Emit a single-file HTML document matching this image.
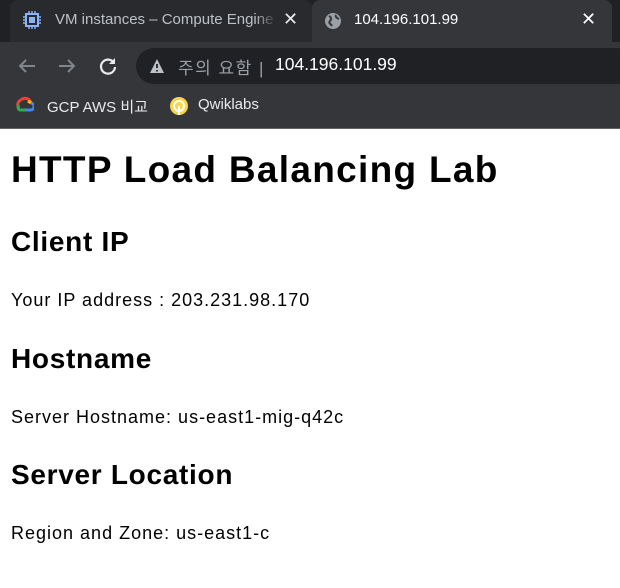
<!DOCTYPE html>
<html><head><meta charset="utf-8"><style>
*{margin:0;padding:0;box-sizing:border-box}
body{width:620px;height:588px;background:#fff;font-family:"Liberation Sans","Noto Sans CJK KR",sans-serif;overflow:hidden;position:relative}
.top{position:absolute;left:0;top:0;width:620px;height:42px;background:#202124}
.tab1{position:absolute;left:10px;top:0;width:302px;height:42px;background:#292a2d;border-radius:8px 8px 0 0;color:#bdc1c6;font-size:15px}
.tab2{position:absolute;left:312px;top:0;width:300px;height:42px;background:#35363a;border-radius:8px 8px 0 0;color:#fff;font-size:15px}
.tool{position:absolute;left:0;top:42px;width:620px;height:86px;background:#35363a}
.addr{position:absolute;left:136px;top:48px;width:500px;height:36px;background:#202124;border-radius:18px}
.t{position:absolute;white-space:nowrap}
.line{position:absolute;left:0;top:128px;width:620px;height:1px;background:#5f6368}
.c{position:absolute;left:11px;color:#000;white-space:nowrap}
h1{font-size:37px;font-weight:bold;letter-spacing:1.3px}
h2{font-size:28px;font-weight:bold;letter-spacing:0.7px}
p{font-size:18px;letter-spacing:1px}
</style></head><body>
<div class="top"></div>
<div class="tab1">
 <svg class="t" style="left:12px;top:10px" width="20" height="20" viewBox="0 0 20 20"><rect x="4" y="4" width="12" height="12" fill="none" stroke="#8ab4f8" stroke-width="2"/><rect x="7" y="7" width="6" height="6" fill="#8ab4f8"/><path d="M7 1v3M10 1v3M13 1v3M7 16v3M10 16v3M13 16v3M1 7h3M1 10h3M1 13h3M16 7h3M16 10h3M16 13h3" stroke="#8ab4f8" stroke-width="1.4"/></svg>
 <div class="t" style="left:45px;top:11px;width:220px;overflow:hidden">VM instances – Compute Engine</div>
 <div class="t" style="left:245px;top:8px;width:22px;height:26px;background:linear-gradient(to right,rgba(41,42,45,0),#292a2d)"></div>
 <div class="t" style="left:273px;top:9px;font-size:18px;color:#e8eaed">✕</div>
</div>
<div class="tab2">
 <svg class="t" style="left:12px;top:12px" width="18" height="18" viewBox="0 0 18 18"><circle cx="9" cy="9" r="8" fill="#9aa0a6"/><path d="M5 4c2 1 3 3 1 5s1 3 2 5M12 3c-1 2 1 3 3 4" stroke="#35363a" stroke-width="2" fill="none"/></svg>
 <div class="t" style="left:42px;top:11px">104.196.101.99</div>
 <div class="t" style="left:269px;top:9px;font-size:18px">✕</div>
</div>
<div class="tool"></div>
<svg class="t" style="left:16px;top:55px" width="22" height="22" viewBox="0 0 22 22"><path d="M19 11H4M10 5l-6 6 6 6" stroke="#80868b" stroke-width="2" fill="none"/></svg>
<svg class="t" style="left:56px;top:55px" width="22" height="22" viewBox="0 0 22 22"><path d="M3 11h15M12 5l6 6-6 6" stroke="#80868b" stroke-width="2" fill="none"/></svg>
<svg class="t" style="left:97px;top:55px" width="22" height="22" viewBox="0 0 22 22"><path d="M17 8A7 7 0 1 0 18 12" stroke="#e8eaed" stroke-width="2.2" fill="none"/><path d="M18 3v6h-6z" fill="#e8eaed"/></svg>
<div class="addr"></div>
<svg class="t" style="left:149px;top:58px" width="16" height="16" viewBox="0 0 16 16"><path d="M8 1L15 15H1z" fill="#bdc1c6"/><path d="M8 6v4M8 12v1.5" stroke="#202124" stroke-width="1.8"/></svg>
<div class="t" style="left:178px;top:54px;font-size:17px;color:#9aa0a6;letter-spacing:1.5px">주의 요함 |</div>
<div class="t" style="left:275px;top:54px;font-size:17.5px;color:#fff">104.196.101.99</div>
<svg class="t" style="left:16px;top:96px" width="18" height="16" viewBox="0 0 18 16"><path d="M3 12A5 5 0 0 1 5 4" stroke="#ea4335" stroke-width="3" fill="none"/><path d="M5 4A6 6 0 0 1 15 7" stroke="#ea4335" stroke-width="3" fill="none"/><path d="M15 7A3 3 0 0 1 14 14H9" stroke="#4285f4" stroke-width="3" fill="none"/><path d="M9 14H4A3 3 0 0 1 3 9" stroke="#34a853" stroke-width="3" fill="none"/><path d="M12 5l3 2" stroke="#fbbc04" stroke-width="3"/></svg>
<div class="t" style="left:47px;top:96px;font-size:15px;color:#e8eaed">GCP AWS 비교</div>
<svg class="t" style="left:169px;top:96px" width="20" height="20" viewBox="0 0 20 20"><circle cx="10" cy="10" r="9" fill="#f9d649"/><circle cx="10" cy="10" r="5" fill="none" stroke="#fff" stroke-width="2"/><path d="M10 10v9" stroke="#fff" stroke-width="2"/></svg>
<div class="t" style="left:198px;top:96px;font-size:15px;color:#e8eaed">Qwiklabs</div>
<div class="line"></div>
<h1 class="c" style="top:149px">HTTP Load Balancing Lab</h1>
<h2 class="c" style="top:226px">Client IP</h2>
<p class="c" style="top:290px">Your IP address : 203.231.98.170</p>
<h2 class="c" style="top:343px">Hostname</h2>
<p class="c" style="top:407px">Server Hostname: us-east1-mig-q42c</p>
<h2 class="c" style="top:459px">Server Location</h2>
<p class="c" style="top:523px">Region and Zone: us-east1-c</p>
</body></html>
